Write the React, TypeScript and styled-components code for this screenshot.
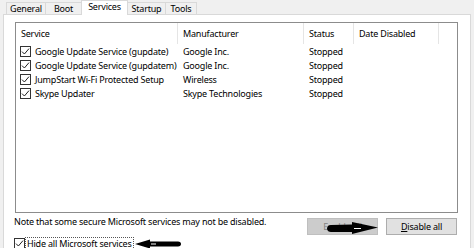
import React from "react";
import styled, { createGlobalStyle } from "styled-components";

const Global = createGlobalStyle`
  html, body { margin: 0; padding: 0; background: #f0f0f0; }
  body { font-family: "Noto Sans", "Liberation Sans", sans-serif; }
  * { box-sizing: border-box; }
`;

const Window = styled.div`
  width: 474px;
  height: 248px;
  overflow: hidden;
  background: #f0f0f0;
  display: flex;
  flex-direction: column;
  font-family: "Noto Sans", "Liberation Sans", sans-serif;
  font-size: 9px;
  letter-spacing: -0.2px;
  color: #000;
`;

const TabStrip = styled.div`
  display: flex;
  align-items: flex-end;
  height: 14px;
  padding-left: 7px;
  position: relative;
  z-index: 1;
`;

const Tab = styled.div<{ $active?: boolean; $w: number }>`
  width: ${(p) => p.$w}px;
  height: ${(p) => (p.$active ? 15 : 12)}px;
  margin-bottom: ${(p) => (p.$active ? -1 : 0)}px;
  margin-left: -1px;
  display: flex;
  align-items: center;
  justify-content: center;
  background: ${(p) => (p.$active ? "#ffffff" : "#f0f0f0")};
  border: 1px solid #d9d9d9;
  border-bottom: none;
  line-height: 1;
  padding-bottom: ${(p) => (p.$active ? 3 : 0)}px;
`;

const Panel = styled.div`
  flex: 1;
  margin: 0 3px;
  background: #fff;
  border: 1px solid #d9d9d9;
  border-bottom: none;
  padding: 7px 12px 0 11px;
  display: flex;
  flex-direction: column;
`;

const ListView = styled.div`
  height: 191px;
  border: 1px solid #8c8c8c;
  background: #fff;
  display: flex;
  flex-direction: column;
`;

const cols = "162px 126px 50px 85px 1fr";

const HeaderRow = styled.div`
  display: grid;
  grid-template-columns: ${cols};
  height: 21px;
`;

const HeaderCell = styled.div<{ $last?: boolean }>`
  display: flex;
  align-items: center;
  padding-left: 5px;
  border-right: ${(p) => (p.$last ? "none" : "1px solid #e5e5e5")};
`;

const Row = styled.div`
  display: grid;
  grid-template-columns: ${cols};
  height: 14px;
  align-items: center;
`;

const Cell = styled.div`
  display: flex;
  align-items: center;
  padding-left: 5px;
  white-space: nowrap;
  overflow: visible;
`;

const ServiceCell = styled(Cell)`
  padding-left: 4px;
  gap: 4px;
`;

const Box = styled.span`
  width: 11px;
  height: 11px;
  border: 1px solid #333;
  background: #fff;
  display: inline-flex;
  align-items: center;
  justify-content: center;
  flex: none;
`;

const BottomRow = styled.div`
  display: flex;
  justify-content: space-between;
  align-items: flex-start;
  margin-top: 4px;
  padding-right: 1px;
`;

const Note = styled.div`
  margin-left: -1px;
  line-height: 10px;
  white-space: nowrap;
`;

const Buttons = styled.div`
  display: flex;
  gap: 8px;
  margin-top: 1px;
`;

const Button = styled.div<{ $disabled?: boolean }>`
  position: relative;
  width: 71px;
  height: 17px;
  display: flex;
  align-items: center;
  justify-content: center;
  background: ${(p) => (p.$disabled ? "#cccccc" : "#e1e1e1")};
  border: 1px solid ${(p) => (p.$disabled ? "#bfbfbf" : "#adadad")};
  color: ${(p) => (p.$disabled ? "#838383" : "#000")};
  padding-bottom: 1px;
`;

const Overlay = styled.svg`
  position: absolute;
  left: 19px;
  top: 2px;
`;

const HideRow = styled.div`
  display: flex;
  align-items: center;
  margin-top: 2px;
  margin-left: -1px;
  height: 12px;
  gap: 1px;
`;

const FocusLabel = styled.span`
  outline: 1px dotted #555;
  padding: 0 1px 0 1px;
  line-height: 11px;
  white-space: nowrap;
`;

const Under = styled.span`
  text-decoration: underline;
  text-underline-offset: 1px;
`;

const Pointer = styled.svg`
  margin-left: 1px;
  margin-top: 2px;
  flex: none;
`;

const Check = () => (
  <Box>
    <svg width="9" height="9" viewBox="0 0 9 9">
      <path d="M1 4.6 L3.4 7 L8 1.6" fill="none" stroke="#222" strokeWidth="1" />
    </svg>
  </Box>
);

const services = [
  ["Google Update Service (gupdate)", "Google Inc."],
  ["Google Update Service (gupdatem)", "Google Inc."],
  ["JumpStart Wi-Fi Protected Setup", "Wireless"],
  ["Skype Updater", "Skype Technologies"],
];

export default function App() {
  return (
    <>
      <Global />
      <Window>
        <TabStrip>
          <Tab $w={40}>General</Tab>
          <Tab $w={37}>Boot</Tab>
          <Tab $w={47} $active>Services</Tab>
          <Tab $w={39}>Startup</Tab>
          <Tab $w={32}>Tools</Tab>
        </TabStrip>
        <Panel>
          <ListView>
            <HeaderRow>
              <HeaderCell>Service</HeaderCell>
              <HeaderCell>Manufacturer</HeaderCell>
              <HeaderCell>Status</HeaderCell>
              <HeaderCell>Date Disabled</HeaderCell>
              <HeaderCell $last />
            </HeaderRow>
            {services.map(([name, maker]) => (
              <Row key={name}>
                <ServiceCell>
                  <Check />
                  {name}
                </ServiceCell>
                <Cell>{maker}</Cell>
                <Cell>Stopped</Cell>
                <Cell />
                <Cell />
              </Row>
            ))}
          </ListView>
          <BottomRow>
            <Note>Note that some secure Microsoft services may not be disabled.</Note>
            <Buttons>
              <Button $disabled>
                Enable all
                <Overlay width="52" height="14" viewBox="0 0 52 14">
                  <path
                    d="M0 7.5 C0 5 2 4 4 4 L25 3.5 L25 1 L51 6.5 L25 13 L25 11 L4 11 C2 11 0 10 0 7.5 Z"
                    fill="#000"
                  />
                  <path d="M27 7.5 L34 7.5" stroke="#fff" strokeWidth="1" />
                </Overlay>
              </Button>
              <Button>
                <span>
                  <Under>D</Under>isable all
                </span>
              </Button>
            </Buttons>
          </BottomRow>
          <HideRow>
            <Check />
            <FocusLabel>
              <Under>H</Under>ide all Microsoft services
            </FocusLabel>
            <Pointer width="46" height="10" viewBox="0 0 46 10">
              <path
                d="M0 5 L15 0.5 L15 2.5 L43 2.5 C45 2.5 46 3.5 46 5 C46 6.5 45 7.5 43 7.5 L15 7.5 L15 9.5 Z"
                fill="#000"
              />
              <path d="M16 5 L21 5" stroke="#fff" strokeWidth="1" />
            </Pointer>
          </HideRow>
        </Panel>
      </Window>
    </>
  );
}
